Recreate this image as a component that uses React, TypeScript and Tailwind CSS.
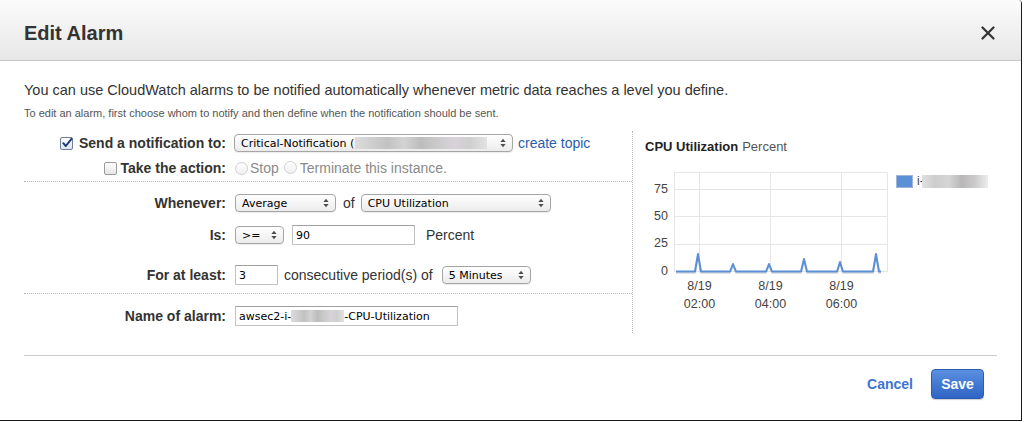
import React from "react";

function Arrows() {
  return (
    <svg width="6" height="10" viewBox="0 0 6 10" className="shrink-0">
      <path d="M3 0.8 L5.6 4 L0.4 4 Z" fill="#4d4d4d" />
      <path d="M3 9.2 L5.6 6 L0.4 6 Z" fill="#4d4d4d" />
    </svg>
  );
}

function Blur({ className }: { className: string }) {
  return (
    <span
      className={
        "inline-block h-[12px] bg-[linear-gradient(90deg,#dcdcdc_0%,#cfcfcf_12%,#c2c2c2_25%,#d3d3d3_37%,#bdbdbd_50%,#cacaca_62%,#d8d2da_75%,#cfcfcf_87%,#e2e2e2_100%)] " +
        className
      }
    />
  );
}

function Select({ className, children }: { className: string; children: React.ReactNode }) {
  return (
    <div
      className={
        "flex h-[18px] shrink-0 items-center justify-between rounded-[4px] border border-[#a5a5a5] bg-linear-to-b from-white to-[#ececec] pl-[6px] pr-[6px] font-['DejaVu_Sans',sans-serif] text-[11px] leading-none text-black shadow-[0_1px_1px_rgba(0,0,0,0.08)] " +
        className
      }
    >
      <div className="flex min-w-0 items-center overflow-hidden whitespace-nowrap">{children}</div>
      <Arrows />
    </div>
  );
}

function TextBox({ className, children }: { className: string; children: React.ReactNode }) {
  return (
    <div
      className={
        "flex h-[20px] shrink-0 items-center overflow-hidden whitespace-nowrap border border-[#c2c2c2] border-t-[#a0a0a0] bg-white px-[3px] font-['DejaVu_Sans',sans-serif] text-[11px] leading-none text-black " +
        className
      }
    >
      {children}
    </div>
  );
}

function CheckBox({ checked }: { checked: boolean }) {
  return (
    <span
      className={
        checked
          ? "relative inline-flex h-[13px] w-[13px] shrink-0 items-center justify-center rounded-[2px] border border-[#6f7f9c] bg-linear-to-b from-white to-[#dfe5ee]"
          : "relative inline-flex h-[13px] w-[13px] shrink-0 items-center justify-center rounded-[2px] border border-[#9b9b9b] bg-linear-to-b from-white to-[#e6e6e6]"
      }
    >
      {checked && (
        <svg width="12" height="12" viewBox="0 0 12 12" className="absolute left-[0px] top-[-1px]">
          <path d="M2.3 6.2 L4.8 9 L10.5 1.8" fill="none" stroke="#1e3c78" strokeWidth="2" strokeLinecap="round" strokeLinejoin="round" />
        </svg>
      )}
    </span>
  );
}

function Radio() {
  return (
    <span className="inline-block h-[13px] w-[13px] shrink-0 rounded-full border border-[#cfcfcf] bg-linear-to-b from-white to-[#f0f0f0]" />
  );
}

function Row({ label, children, className }: { label: React.ReactNode; children: React.ReactNode; className: string }) {
  return (
    <div className={"flex items-center " + className}>
      <div className="flex w-[202px] shrink-0 items-center justify-end text-[14px] font-bold leading-none text-[#333]">
        {label}
      </div>
      <div className="ml-[9px] flex items-center text-[14px] leading-none text-[#333]">{children}</div>
    </div>
  );
}

function Chart() {
  const line =
    "M37 106.5 L56 106.5 L59 89 L62 106.5 L91 106.5 L94 99 L97 106.5 L127 106.5 L130 99 L133 106.5 L162 106.5 L165 94 L168 106.5 L198 106.5 L201 97 L204 106.5 L234 106.5 L237 89 L240 106.5 L242 106.5";
  return (
    <svg width="370" height="160" viewBox="0 0 370 160" className="mt-[9px] ml-[6px] block font-['Liberation_Sans',Arial,sans-serif]">
      <defs>
        <linearGradient id="blurg" x1="0" x2="1" y1="0" y2="0">
          <stop offset="0" stopColor="#e0e0e0" />
          <stop offset="0.2" stopColor="#cdcdcd" />
          <stop offset="0.4" stopColor="#d6d6d6" />
          <stop offset="0.6" stopColor="#b9b6b6" />
          <stop offset="0.8" stopColor="#cbcbcb" />
          <stop offset="1" stopColor="#ededed" />
        </linearGradient>
      </defs>
      <g stroke="#e6e6e6" strokeWidth="1" fill="none">
        <line x1="35" y1="7.5" x2="249" y2="7.5" />
        <line x1="35" y1="24.5" x2="249" y2="24.5" />
        <line x1="35" y1="51.5" x2="249" y2="51.5" />
        <line x1="35" y1="79.5" x2="249" y2="79.5" />
        <line x1="35" y1="106.5" x2="249" y2="106.5" />
        <line x1="35.5" y1="7" x2="35.5" y2="107" />
        <line x1="60.5" y1="7" x2="60.5" y2="107" />
        <line x1="131.5" y1="7" x2="131.5" y2="107" />
        <line x1="202.5" y1="7" x2="202.5" y2="107" />
        <line x1="248.5" y1="7" x2="248.5" y2="107" />
      </g>
      <g fill="#444" fontSize="12.5" textAnchor="end" dominantBaseline="middle">
        <text x="29" y="25">75</text>
        <text x="29" y="52">50</text>
        <text x="29" y="79">25</text>
        <text x="29" y="107">0</text>
      </g>
      <g fill="#444" fontSize="12.5" textAnchor="middle" dominantBaseline="middle">
        <text x="60.5" y="122">8/19</text>
        <text x="60.5" y="139.5">02:00</text>
        <text x="131.5" y="122">8/19</text>
        <text x="131.5" y="139.5">04:00</text>
        <text x="202.5" y="122">8/19</text>
        <text x="202.5" y="139.5">06:00</text>
      </g>
      <path d={line} fill="none" stroke="rgba(0,0,0,0.12)" strokeWidth="2" transform="translate(0,1.5)" strokeLinejoin="round" />
      <path d={line} fill="none" stroke="#5b8fd6" strokeWidth="2" strokeLinejoin="round" />
      <rect x="257.5" y="10.5" width="16" height="12" fill="#5b8fd6" stroke="#9fb6d9" strokeWidth="1" />
      <text x="278" y="17" fontSize="12" fill="#444" dominantBaseline="middle">i-</text>
      <rect x="283" y="10" width="66" height="13" fill="url(#blurg)" />
    </svg>
  );
}

export default function App() {
  return (
    <div className="h-[421px] w-[1022px] overflow-hidden rounded-tr-[4px] border-r border-b border-[#1a1a1a] bg-white font-['Liberation_Sans',Arial,sans-serif] text-[#333]">
      {/* Header */}
      <div className="flex h-[61px] items-center justify-between border-b border-[#c9c9c9] bg-linear-to-b from-[#fbfbfb] to-[#e7e7e7] pt-[5px] pl-[24px] pr-[26px]">
        <div className="text-[20px] font-bold text-[#333]">Edit Alarm</div>
        <svg width="14" height="14" viewBox="0 0 14 14">
          <path d="M1.5 1.5 L12.5 12.5 M12.5 1.5 L1.5 12.5" stroke="#333" strokeWidth="2.2" strokeLinecap="round" />
        </svg>
      </div>

      {/* Body */}
      <div className="px-[24px] pt-[19px]">
        <div className="text-[14.5px] leading-[20px] text-[#333]">
          You can use CloudWatch alarms to be notified automatically whenever metric data reaches a level you define.
        </div>
        <div className="mt-[5px] text-[11px] leading-[16px] text-[#555]">
          To edit an alarm, first choose whom to notify and then define when the notification should be sent.
        </div>

        <div className="mt-[10px] flex">
          {/* Form column */}
          <div className="w-[609px] shrink-0 border-r border-dotted border-[#b5b5b5]">
            <div className="border-b border-dotted border-[#b5b5b5]">
              <Row
                className="h-[24px]"
                label={
                  <>
                    <CheckBox checked />
                    <span className="ml-[6px]">Send a notification to:</span>
                  </>
                }
              >
                <div className="-ml-[1px] flex items-center">
                  <Select className="w-[279px]">
                    <span>Critical-Notification (</span>
                    <Blur className="ml-[1px] w-[132px]" />
                  </Select>
                  <span className="ml-[5px] text-[#2b5cae]">create topic</span>
                </div>
              </Row>
              <Row
                className="h-[26px]"
                label={
                  <>
                    <CheckBox checked={false} />
                    <span className="ml-[3px]">Take the action:</span>
                  </>
                }
              >
                <Radio />
                <span className="ml-[2px] text-[#8a8a8a]">Stop</span>
                <span className="ml-[5px]">
                  <Radio />
                </span>
                <span className="ml-[3px] text-[#8a8a8a]">Terminate this instance.</span>
              </Row>
            </div>

            <div className="border-b border-dotted border-[#b5b5b5] pt-[10px] pb-[7px]">
              <Row className="h-[22px]" label="Whenever:">
                <Select className="w-[101px]">
                  <span>Average</span>
                </Select>
                <span className="ml-[7px]">of</span>
                <Select className="ml-[6px] w-[190px]">
                  <span>CPU Utilization</span>
                </Select>
              </Row>
              <Row className="mt-[10px] h-[22px]" label="Is:">
                <Select className="w-[49px]">
                  <span>&gt;=</span>
                </Select>
                <TextBox className="ml-[8px] w-[123px]">90</TextBox>
                <span className="ml-[11px]">Percent</span>
              </Row>
              <Row className="mt-[18px] h-[22px]" label="For at least:">
                <TextBox className="w-[43px]">3</TextBox>
                <span className="ml-[6px]">consecutive period(s) of</span>
                <Select className="ml-[9px] w-[89px]">
                  <span>5 Minutes</span>
                </Select>
              </Row>
            </div>

            <div className="pt-[11px] pb-[6px]">
              <Row className="h-[22px]" label="Name of alarm:">
                <TextBox className="w-[223px]">
                  <span>awsec2-i-</span>
                  <Blur className="w-[53px]" />
                  <span>-CPU-Utilization</span>
                </TextBox>
              </Row>
            </div>
          </div>

          {/* Chart column */}
          <div className="flex-1 pt-[7px]">
            <div className="pl-[12px] text-[13px] leading-[18px]">
              <span className="font-bold text-[#222]">CPU Utilization</span>
              <span className="ml-[4px] text-[#555]">Percent</span>
            </div>
            <Chart />
          </div>
        </div>
      </div>

      {/* Separator */}
      <div className="mt-[22px] ml-[24px] mr-[24px] border-t border-[#cccccc]" />

      {/* Footer */}
      <div className="flex items-center justify-end pt-[13px] pr-[37px]">
        <span className="mr-[18px] text-[14px] font-bold text-[#3d74d1]">Cancel</span>
        <div className="flex h-[30px] w-[53px] items-center justify-center rounded-[4px] border border-[#2c5db5] bg-linear-to-b from-[#5a8fe0] to-[#2f64c4] text-[14px] font-bold text-white shadow-[0_1px_1px_rgba(0,0,0,0.2)]">
          Save
        </div>
      </div>
    </div>
  );
}
